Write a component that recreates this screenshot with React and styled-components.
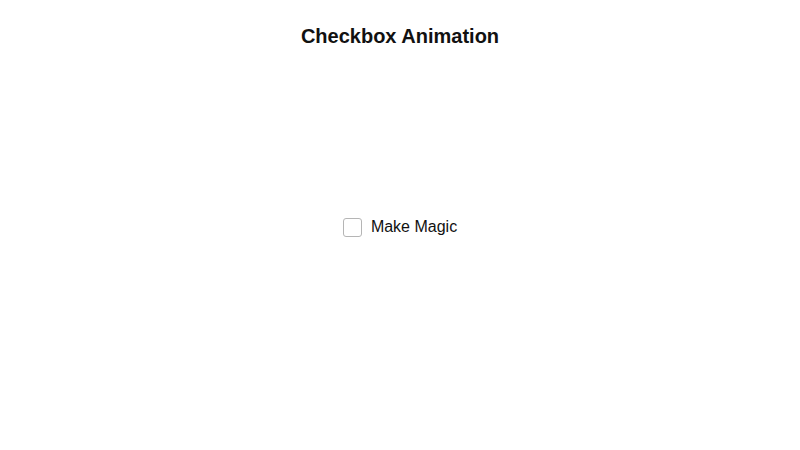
import React, { useState } from "react";
import styled, { createGlobalStyle } from "styled-components";

const GlobalStyle = createGlobalStyle`
  html, body {
    margin: 0;
    padding: 0;
    background: #ffffff;
    font-family: "Liberation Sans", Arial, sans-serif;
    color: #111;
  }
`;

const Page = styled.div`
  height: 450px;
  display: grid;
  grid-template-rows: auto 1fr;
`;

const Title = styled.h1`
  margin: 24px 0 0;
  text-align: center;
  font-size: 20px;
  font-weight: 700;
  line-height: 24px;
`;

const Stage = styled.div`
  display: flex;
  align-items: center;
  justify-content: center;
  padding-bottom: 44px;
`;

const Label = styled.label`
  display: flex;
  align-items: center;
  gap: 9px;
  font-size: 16px;
  cursor: pointer;
  user-select: none;
`;

const Box = styled.span`
  width: 17px;
  height: 17px;
  border: 1px solid ${(p) => (p.$checked ? "#6c5ce7" : "#b5b5b5")};
  border-radius: 3px;
  background: ${(p) => (p.$checked ? "#6c5ce7" : "#fff")};
  display: flex;
  align-items: center;
  justify-content: center;
  transition: all 0.2s ease;
`;

const Hidden = styled.input`
  display: none;
`;

export default function App() {
  const [checked, setChecked] = useState(false);
  return (
    <>
      <GlobalStyle />
      <Page>
        <Title>Checkbox Animation</Title>
        <Stage>
          <Label>
            <Hidden
              type="checkbox"
              checked={checked}
              onChange={() => setChecked((c) => !c)}
            />
            <Box $checked={checked}>
              {checked && (
                <svg width="12" height="12" viewBox="0 0 12 12">
                  <path d="M2 6.5 L5 9 L10 3" stroke="#fff" strokeWidth="2" fill="none" />
                </svg>
              )}
            </Box>
            Make Magic
          </Label>
        </Stage>
      </Page>
    </>
  );
}
